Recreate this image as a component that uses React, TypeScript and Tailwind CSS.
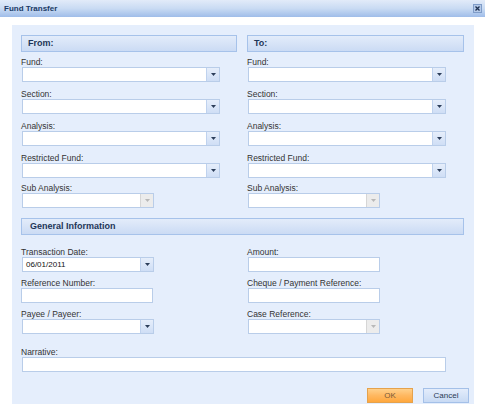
import React from "react";

function Arrow({ disabled }: { disabled?: boolean }) {
  return (
    <svg width="5" height="3" viewBox="0 0 5 3">
      <path d="M0 0 H5 L2.5 3 Z" fill={disabled ? "#b8b8b8" : "#2c3e5a"} />
    </svg>
  );
}

function Combo({ w, disabled, value }: { w: string; disabled?: boolean; value?: string }) {
  return (
    <div className={`flex h-[15px] ml-[1px] border border-[#b9cde9] bg-white ${w}`}>
      <div className="flex-1 flex items-center pl-[3px] text-[8px] leading-none text-[#111]">{value}</div>
      <div
        className={`w-[13px] h-full flex items-center justify-center border-l ${
          disabled
            ? "bg-[#ececec] border-[#d6d6d6]"
            : "bg-gradient-to-b from-[#e6eefb] to-[#cfdef5] border-[#bfd2ee]"
        }`}
      >
        <Arrow disabled={disabled} />
      </div>
    </div>
  );
}

function TextBox({ w }: { w: string }) {
  return <div className={`h-[15px] border border-[#b9cde9] bg-white ${w}`} />;
}

function Label({ children }: { children: React.ReactNode }) {
  return <div className="h-[10px] leading-[10px] text-[8.5px] text-[#333] whitespace-nowrap">{children}</div>;
}

function Header({ children, w }: { children: React.ReactNode; w: string }) {
  return (
    <div
      className={`h-[17px] ${w} border border-[#a6c2ea] bg-gradient-to-b from-[#e3ecfa] to-[#cbdbf4] flex items-center pl-[6px] text-[9px] font-bold text-[#1e3557]`}
    >
      {children}
    </div>
  );
}

function Column({ title, w }: { title: string; w: string }) {
  const fields = ["Fund:", "Section:", "Analysis:", "Restricted Fund:"];
  return (
    <div className={`flex flex-col ${w}`}>
      <Header w="w-full">{title}</Header>
      <div className="flex flex-col gap-[7px] mt-[5px]">
        {fields.map((f) => (
          <div key={f} className="flex flex-col">
            <Label>{f}</Label>
            <Combo w="w-[198px]" />
          </div>
        ))}
        <div className="flex flex-col -mt-[2px]">
          <Label>Sub Analysis:</Label>
          <Combo w="w-[132px]" disabled />
        </div>
      </div>
    </div>
  );
}

export default function App() {
  return (
    <div className="w-[485px] h-[411px] bg-white overflow-hidden font-['Liberation_Sans',Arial,sans-serif]">
      <div className="h-[17px] flex items-center justify-between pl-[4px] pr-[3px] bg-gradient-to-b from-[#e2ebf9] via-[#c9dbf3] to-[#9fbde9]">
        <span className="text-[8px] font-bold text-[#1a3a66] leading-none">Fund Transfer</span>
        <svg width="9" height="9" viewBox="0 0 9 9">
          <rect x="0.5" y="0.5" width="8" height="8" fill="#b4c9e8" stroke="#7f9cc8" />
          <path d="M2.5 2.5 L6.5 6.5 M6.5 2.5 L2.5 6.5" stroke="#1d3050" strokeWidth="1.3" />
        </svg>
      </div>
      <div className="ml-[12px] mt-[8px] w-[462px] h-[379px] bg-[#e5eefc] pl-[9px] pt-[10px] flex flex-col">
        <div className="flex gap-[10px]">
          <Column title="From:" w="w-[216px]" />
          <Column title="To:" w="w-[217px]" />
        </div>
        <div className="mt-[10px]">
          <Header w="w-[443px]">
            <span className="pl-[2px]">General Information</span>
          </Header>
        </div>
        <div className="flex mt-[12px]">
          <div className="w-[226px] flex flex-col gap-[6px]">
            <div className="flex flex-col">
              <Label>Transaction Date:</Label>
              <Combo w="w-[132px]" value="06/01/2011" />
            </div>
            <div className="flex flex-col">
              <Label>Reference Number:</Label>
              <TextBox w="w-[132px]" />
            </div>
            <div className="flex flex-col">
              <Label>Payee / Payeer:</Label>
              <Combo w="w-[132px]" />
            </div>
          </div>
          <div className="flex flex-col gap-[6px]">
            <div className="flex flex-col">
              <Label>Amount:</Label>
              <div className="ml-[1px]"><TextBox w="w-[132px]" /></div>
            </div>
            <div className="flex flex-col">
              <Label>Cheque / Payment Reference:</Label>
              <div className="ml-[1px]"><TextBox w="w-[132px]" /></div>
            </div>
            <div className="flex flex-col">
              <Label>Case Reference:</Label>
              <Combo w="w-[132px]" disabled />
            </div>
          </div>
        </div>
        <div className="flex flex-col mt-[13px]">
          <Label>Narrative:</Label>
          <div className="ml-[1px]"><TextBox w="w-[424px]" /></div>
        </div>
        <div className="flex gap-[10px] ml-[346px] mt-[16px]">
          <div className="w-[46px] h-[15px] border border-[#e5a24c] bg-gradient-to-b from-[#ffd08a] via-[#ffb860] to-[#ffa83c] flex items-center justify-center text-[8px] text-[#7a5a3a]">
            OK
          </div>
          <div className="w-[46px] h-[15px] border border-[#a4c0e8] bg-gradient-to-b from-[#e4edfb] to-[#c8daf4] flex items-center justify-center text-[8px] text-[#2a3a55]">
            Cancel
          </div>
        </div>
      </div>
    </div>
  );
}
